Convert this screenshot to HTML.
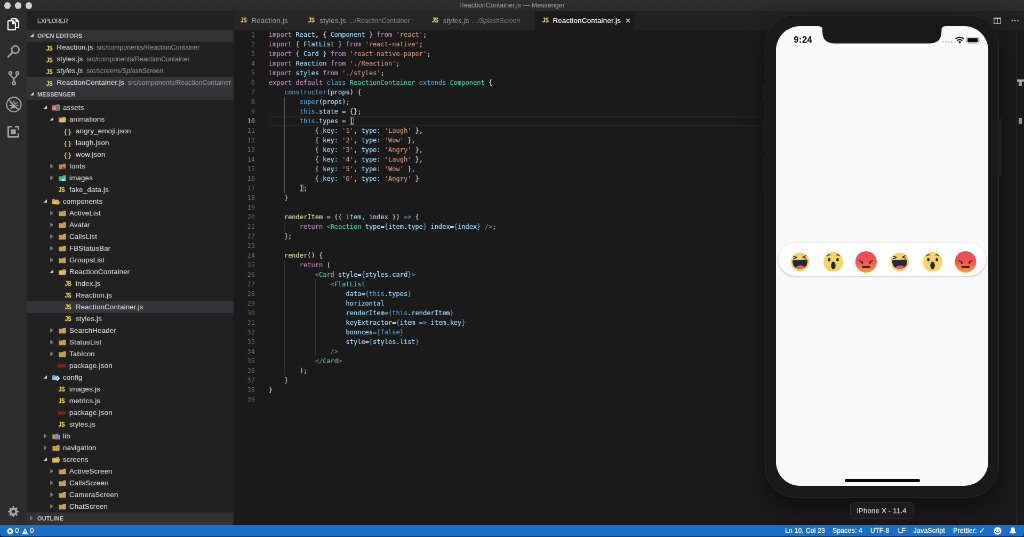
<!DOCTYPE html><html lang="en"><head><meta charset="utf-8"><title>ReactionContainer.js — Messenger</title><style>
*{box-sizing:border-box;margin:0;padding:0}
html,body{width:1024px;height:537px;overflow:hidden;background:#1a1a1a}
body{font-family:"Liberation Sans",sans-serif}
#root{will-change:transform;position:absolute;left:0;top:0;width:1920px;height:1007px;transform:scale(0.533333);transform-origin:0 0;overflow:hidden;background:#1a1a1a;color:#ccc;font-size:13px}
.abs{position:absolute}
#title{left:0;top:0;width:1920px;height:20.5px;background:linear-gradient(#2f2f2f,#2a2a2a);color:#929292;font-size:12.6px;line-height:21px;text-align:center;-webkit-text-stroke:0.2px #929292}
.tl{position:absolute;top:4px;width:12.5px;height:12.5px;border-radius:50%;background:#d2d2d2}
#act{left:0;top:20.5px;width:50px;height:964px;background:#2d2d2d}
#side{left:50px;top:20.5px;width:388.4px;height:964px;background:#212121}
#tabs{left:438px;top:20.5px;width:1482px;height:35px;background:#212121}
#editor{left:438px;top:55.5px;width:1482px;height:930px;background:#1a1a1a}
#status{left:0;top:984px;width:1920px;height:23px;background:#1a6fcb;color:#fff;font-size:12px;line-height:22px}

.cl{position:absolute;left:66px;height:18px;line-height:18px;-webkit-text-stroke:0.22px;font-family:"DejaVu Sans Mono","Liberation Mono",monospace;font-size:12px;white-space:pre;color:#d4d4d4}
.ln{position:absolute;left:0;width:40px;height:18px;line-height:18px;text-align:right;font-family:"DejaVu Sans Mono","Liberation Mono",monospace;font-size:12px;color:#6e6e6e}
.ln.cur{color:#c6c6c6}
.ig{position:absolute;width:1px;height:18px;background:#333}.ig.a{background:#5a5a5a}
.k{color:#c586c0}.b{color:#569cd6}.t{color:#4ec9b0}.v{color:#9cdcfe}.s{color:#ce9178}.f{color:#dcdcaa}.g{color:#808080}
.m{outline:1px solid #777;outline-offset:-1px}
.js{position:absolute;font-family:"Liberation Sans",sans-serif;font-weight:bold;font-size:12.5px;letter-spacing:-0.5px;color:#e8d44a;line-height:12px;transform:scaleX(0.8);transform-origin:0 50%;-webkit-text-stroke:0.3px #e8d44a}
.tab{position:absolute;top:0;height:35px;background:#262626;border-right:1.5px solid #1d1d1d}
.tab .lb{position:absolute;top:0;line-height:36px;font-size:13.2px;white-space:nowrap;color:#999;letter-spacing:0.3px;-webkit-text-stroke:0.15px #999}
.tab .ds{position:absolute;top:0;line-height:37px;font-size:12.1px;white-space:nowrap;color:#7d7d7d;-webkit-text-stroke:0.15px #7d7d7d}
.tab.act{background:#1a1a1a}
.tab.act .lb{color:#fff;-webkit-text-stroke:0.2px #fff}
.st{position:absolute;top:0;white-space:nowrap;line-height:22px;font-size:12.3px;color:#fff;letter-spacing:0.15px;-webkit-text-stroke:0.3px #fff}

.hd{left:0;width:388px;height:22px;background:#323232;font-size:11px;font-weight:bold;color:#c8c8c8;line-height:22px;letter-spacing:0.1px}
.row{left:0;width:388px;height:22px}
.row.sel{background:#35363c}
.nm{top:0;line-height:22px;font-size:13.2px;color:#d4d4d4;white-space:nowrap;letter-spacing:0.25px;-webkit-text-stroke:0.2px #d4d4d4}
.dsc{font-size:12.4px;color:#8e8e8e;margin-left:6.5px;letter-spacing:0;-webkit-text-stroke:0.15px #8e8e8e}
</style></head><body><div id="root">
<div id="title" class="abs"><span class="tl" style="left:7.5px"></span><span class="tl" style="left:27.5px"></span><span class="tl" style="left:47.5px"></span><span style="position:relative;left:0px">ReactionContainer.js — Messenger</span></div>
<div id="act" class="abs"><svg class="abs" style="left:13.2px;top:12.2px" width="24" height="24.5" preserveAspectRatio="none" viewBox="0 0 24 24" fill="none" stroke="#fff" stroke-width="2.2" stroke-linejoin="round">
<path d="M8.5 5V3.2Q8.5 2 9.7 2H17L22 7V17.3Q22 18.5 20.8 18.5H16.5"/>
<path d="M3.2 6H11.5L16 10.5V21.3Q16 22.5 14.8 22.5H3.2Q2 22.5 2 21.3V7.2Q2 6 3.2 6Z"/>
<path d="M10.5 6.5V11.5H15.5Z" fill="#fff" stroke-width="1"/>
<path d="M16.5 2.5V7.5H21.5Z" fill="#fff" stroke-width="1"/>
</svg><svg class="abs" style="left:13px;top:63.5px" width="25" height="25" viewBox="0 0 25 25" fill="none" stroke="#a3a3a3" stroke-width="2.7" stroke-linecap="round">
<circle cx="15.8" cy="9" r="6.9"/><path d="M10.4 14.4L2.2 22.8" stroke-width="3.2"/></svg><svg class="abs" style="left:14.5px;top:112px" width="22" height="27" viewBox="0 0 22 27" fill="none" stroke="#a3a3a3" stroke-width="2.4">
<circle cx="4.5" cy="4" r="2.7"/><circle cx="17.5" cy="4" r="2.7"/><circle cx="11" cy="23" r="2.7"/>
<path d="M4.5 6.7C4.5 11 11 12 11 16V20.3M17.5 6.7C17.5 11 11 12 11 16"/></svg><svg class="abs" style="left:10.5px;top:160.5px" width="30" height="30" viewBox="0 0 30 30" fill="none" stroke="#a3a3a3" stroke-width="2.3">
<circle cx="15" cy="15" r="13.5"/><path d="M5.5 5.5L24.5 24.5"/>
<ellipse cx="15" cy="16.5" rx="4.8" ry="6" fill="#a3a3a3" stroke="none"/>
<path d="M15 11V7.5M11 13L7.5 10.5M19 13L22.5 10.5M10.8 17H6.5M19.2 17H23.5M11.5 20.5L8.5 23.5M18.5 20.5L21.5 23.5" stroke-width="1.9"/>
<path d="M8 6L24 22" stroke="#2d2d2d" stroke-width="1.6"/>
</svg><svg class="abs" style="left:14px;top:215px" width="22" height="22" viewBox="0 0 22 22" fill="none" stroke="#a3a3a3" stroke-width="3">
<path d="M8 1.5H1.5V8M14 1.5H20.5V8M8 20.5H1.5V14M14 20.5H20.5V14"/>
<rect x="6.5" y="6.5" width="9" height="9" fill="#a3a3a3" stroke="none"/>
<path d="M1.5 8V14M8 20.5H14" stroke-width="3"/>
</svg><svg class="abs" style="left:0;top:0" width="50" height="964" viewBox="0 0 50 964"><path d="M32.39 937.01L35.22 937.01L35.22 939.59L32.39 939.59L31.14 942.61L33.14 944.61L31.31 946.44L29.31 944.44L26.29 945.69L26.29 948.52L23.71 948.52L23.71 945.69L20.69 944.44L18.69 946.44L16.86 944.61L18.86 942.61L17.61 939.59L14.78 939.59L14.78 937.01L17.61 937.01L18.86 933.99L16.86 931.99L18.69 930.16L20.69 932.16L23.71 930.91L23.71 928.08L26.29 928.08L26.29 930.91L29.31 932.16L31.31 930.16L33.14 931.99L31.14 933.99Z" fill="#a3a3a3"/><circle cx="25" cy="938.3" r="7.7" fill="#a3a3a3"/><circle cx="25" cy="938.3" r="3.3" fill="#2d2d2d"/></svg></div>
<div id="side" class="abs"><div class="abs" style="left:20px;top:1.5px;line-height:35px;font-size:11px;color:#c4c4c4;letter-spacing:-0.35px;-webkit-text-stroke:0.25px #c4c4c4">EXPLORER</div><div class="abs hd" style="top:35px"><svg class="abs" style="left:5.5px;top:6.5px" width="8" height="8" viewBox="0 0 8 8"><path d="M7 0.5V7H0.5Z" fill="#d0d0d0"/></svg><span class="abs" style="left:20px">OPEN EDITORS</span></div><div class="abs row" style="top:57px"><span class="abs" style="left:35.5px;top:5px"><span class="js" style="position:static;display:inline-block;width:16px;text-align:left;padding-left:1px">JS</span></span><span class="abs nm" style="left:56.5px;">Reaction.js<span class="dsc">src/components/ReactionContainer</span></span></div><div class="abs row" style="top:79px"><span class="abs" style="left:35.5px;top:5px"><span class="js" style="position:static;display:inline-block;width:16px;text-align:left;padding-left:1px">JS</span></span><span class="abs nm" style="left:56.5px;">styles.js<span class="dsc">src/components/ReactionContainer</span></span></div><div class="abs row" style="top:101px"><span class="abs" style="left:35.5px;top:5px"><span class="js" style="position:static;display:inline-block;width:16px;text-align:left;padding-left:1px">JS</span></span><span class="abs nm" style="left:56.5px;font-style:italic">styles.js<span class="dsc">src/screens/SplashScreen</span></span></div><div class="abs row sel" style="top:123px"><span class="abs" style="left:35.5px;top:5px"><span class="js" style="position:static;display:inline-block;width:16px;text-align:left;padding-left:1px">JS</span></span><span class="abs nm" style="left:56.5px;">ReactionContainer.js<span class="dsc">src/components/ReactionContainer</span></span></div><div class="abs hd" style="top:145px"><svg class="abs" style="left:5.5px;top:6.5px" width="8" height="8" viewBox="0 0 8 8"><path d="M7 0.5V7H0.5Z" fill="#d0d0d0"/></svg><span class="abs" style="left:20px">MESSENGER</span></div><div class="abs row" style="top:170px"><svg class="abs" style="left:31px;top:6px" width="8" height="8" viewBox="0 0 8 8"><path d="M7 0.5V7H0.5Z" fill="#d0d0d0"/></svg><span class="abs" style="left:47.2px;top:3px"><svg width="16" height="16" viewBox="0 0 16 16"><path d="M0.8 13V4.4L2 3.2H5.2L6.4 4.6H9V13Z" fill="#e06e6e"/><path d="M0.8 13L2.6 7H9V13Z" fill="#ea8080"/><rect x="6.6" y="2.6" width="8.6" height="11" fill="#8f9696"/><rect x="7.8" y="4" width="2.6" height="2.4" fill="#5f6666"/><rect x="11.4" y="4" width="2.6" height="2.4" fill="#5f6666"/><rect x="7.8" y="7.4" width="2.6" height="2.4" fill="#5f6666"/><rect x="11.4" y="7.4" width="2.6" height="2.4" fill="#5f6666"/><rect x="7.8" y="10.8" width="2.6" height="1.8" fill="#5f6666"/><rect x="11.4" y="10.8" width="2.6" height="1.8" fill="#5f6666"/><rect x="9.4" y="1.6" width="4" height="1.4" fill="#e06e6e"/></svg></span><span class="abs nm" style="left:68px">assets</span></div><div class="abs row" style="top:192px"><svg class="abs" style="left:43px;top:6px" width="8" height="8" viewBox="0 0 8 8"><path d="M7 0.5V7H0.5Z" fill="#d0d0d0"/></svg><span class="abs" style="left:59.2px;top:3px"><svg width="16" height="16" viewBox="0 0 16 16"><path d="M1 13.2V4.6H7.6L8.9 3.1H14.2V13.2Z" fill="#c8a052"/><path d="M3.2 6.6H15.4L13.6 13.3H1.2Z" fill="#e2ba6a"/></svg></span><span class="abs nm" style="left:80px">animations</span></div><div class="abs row" style="top:214px"><span class="abs" style="left:71.2px;top:4.5px"><span style="display:inline-block;width:16px;text-align:center;font-family:'Liberation Sans',sans-serif;font-size:12.5px;font-weight:bold;color:#d9c840;letter-spacing:3px;line-height:12px;margin-left:-1px">{}</span></span><span class="abs nm" style="left:92px">angry_emoji.json</span></div><div class="abs row" style="top:236px"><span class="abs" style="left:71.2px;top:4.5px"><span style="display:inline-block;width:16px;text-align:center;font-family:'Liberation Sans',sans-serif;font-size:12.5px;font-weight:bold;color:#d9c840;letter-spacing:3px;line-height:12px;margin-left:-1px">{}</span></span><span class="abs nm" style="left:92px">laugh.json</span></div><div class="abs row" style="top:258px"><span class="abs" style="left:71.2px;top:4.5px"><span style="display:inline-block;width:16px;text-align:center;font-family:'Liberation Sans',sans-serif;font-size:12.5px;font-weight:bold;color:#d9c840;letter-spacing:3px;line-height:12px;margin-left:-1px">{}</span></span><span class="abs nm" style="left:92px">wow.json</span></div><div class="abs row" style="top:280px"><svg class="abs" style="left:43.5px;top:6px" width="6.5" height="9" viewBox="0 0 8 10" preserveAspectRatio="none"><path d="M1 0.8L6.6 5L1 9.2Z" fill="#6f6f6f" stroke="#a0a0a0" stroke-width="0.9"/></svg><span class="abs" style="left:59.2px;top:3px"><svg width="16" height="16" viewBox="0 0 16 16"><path d="M1.4 13.3V4.4H8.4L9.7 2.9H14.6V13.3Z" fill="#c8824c"/><rect x="9.7" y="2.9" width="4.9" height="1.2" fill="#dc9a62"/><path d="M6.4 13.3L8.4 8.2H9.6L11.6 13.3H10.5L10.1 12.2H7.9L7.5 13.3Z" fill="#6e3418"/><path d="M11.8 10.2H14.2V13.3H11.8Z" fill="#6e3418"/></svg></span><span class="abs nm" style="left:80px">fonts</span></div><div class="abs row" style="top:302px"><svg class="abs" style="left:43.5px;top:6px" width="6.5" height="9" viewBox="0 0 8 10" preserveAspectRatio="none"><path d="M1 0.8L6.6 5L1 9.2Z" fill="#6f6f6f" stroke="#a0a0a0" stroke-width="0.9"/></svg><span class="abs" style="left:59.2px;top:3px"><svg width="16" height="16" viewBox="0 0 16 16"><path d="M1.4 13.3V4.4H8.4L9.7 2.9H14.6V13.3Z" fill="#3cb88c"/><rect x="9.7" y="2.9" width="4.9" height="1.2" fill="#6ad4ae"/><path d="M6.6 12.6L9.2 9L10.8 11L12 9.8L14 12.6Z" fill="#eafff6"/><circle cx="12.6" cy="7.4" r="0.9" fill="#eafff6"/></svg></span><span class="abs nm" style="left:80px">images</span></div><div class="abs row" style="top:324px"><span class="abs" style="left:58.8px;top:3.4px"><span class="js" style="position:static;display:inline-block;width:16px;text-align:left;padding-left:1px">JS</span></span><span class="abs nm" style="left:80px">fake_data.js</span></div><div class="abs row" style="top:346px"><svg class="abs" style="left:31px;top:6px" width="8" height="8" viewBox="0 0 8 8"><path d="M7 0.5V7H0.5Z" fill="#d0d0d0"/></svg><span class="abs" style="left:47.2px;top:3px"><svg width="16" height="16" viewBox="0 0 16 16"><path d="M0.8 13V4.2L2 3H5.4L6.6 4.4H12.4V13Z" fill="#c9a558"/><path d="M0.8 13L2.8 6.8H13.6L12.4 13Z" fill="#e0bf74"/><path d="M7 6.6H9.6A1.6 1.6 0 1 1 12.4 6.6H14.2V8.4A1.7 1.7 0 1 1 14.2 11.4V13.4H7V11.4A1.6 1.6 0 1 0 7 8.4Z" fill="#f7a325"/></svg></span><span class="abs nm" style="left:68px">components</span></div><div class="abs row" style="top:368px"><svg class="abs" style="left:43.5px;top:6px" width="6.5" height="9" viewBox="0 0 8 10" preserveAspectRatio="none"><path d="M1 0.8L6.6 5L1 9.2Z" fill="#6f6f6f" stroke="#a0a0a0" stroke-width="0.9"/></svg><span class="abs" style="left:59.2px;top:3px"><svg width="16" height="16" viewBox="0 0 16 16"><path d="M1.4 13.3V4.4H8.4L9.7 2.9H14.6V13.3Z" fill="#c99f4f"/><rect x="9.9" y="2.9" width="4.7" height="1.1" fill="#dcb364"/></svg></span><span class="abs nm" style="left:80px">ActiveList</span></div><div class="abs row" style="top:390px"><svg class="abs" style="left:43.5px;top:6px" width="6.5" height="9" viewBox="0 0 8 10" preserveAspectRatio="none"><path d="M1 0.8L6.6 5L1 9.2Z" fill="#6f6f6f" stroke="#a0a0a0" stroke-width="0.9"/></svg><span class="abs" style="left:59.2px;top:3px"><svg width="16" height="16" viewBox="0 0 16 16"><path d="M1.4 13.3V4.4H8.4L9.7 2.9H14.6V13.3Z" fill="#c99f4f"/><rect x="9.9" y="2.9" width="4.7" height="1.1" fill="#dcb364"/></svg></span><span class="abs nm" style="left:80px">Avatar</span></div><div class="abs row" style="top:412px"><svg class="abs" style="left:43.5px;top:6px" width="6.5" height="9" viewBox="0 0 8 10" preserveAspectRatio="none"><path d="M1 0.8L6.6 5L1 9.2Z" fill="#6f6f6f" stroke="#a0a0a0" stroke-width="0.9"/></svg><span class="abs" style="left:59.2px;top:3px"><svg width="16" height="16" viewBox="0 0 16 16"><path d="M1.4 13.3V4.4H8.4L9.7 2.9H14.6V13.3Z" fill="#c99f4f"/><rect x="9.9" y="2.9" width="4.7" height="1.1" fill="#dcb364"/></svg></span><span class="abs nm" style="left:80px">CallsList</span></div><div class="abs row" style="top:434px"><svg class="abs" style="left:43.5px;top:6px" width="6.5" height="9" viewBox="0 0 8 10" preserveAspectRatio="none"><path d="M1 0.8L6.6 5L1 9.2Z" fill="#6f6f6f" stroke="#a0a0a0" stroke-width="0.9"/></svg><span class="abs" style="left:59.2px;top:3px"><svg width="16" height="16" viewBox="0 0 16 16"><path d="M1.4 13.3V4.4H8.4L9.7 2.9H14.6V13.3Z" fill="#c99f4f"/><rect x="9.9" y="2.9" width="4.7" height="1.1" fill="#dcb364"/></svg></span><span class="abs nm" style="left:80px">FBStatusBar</span></div><div class="abs row" style="top:456px"><svg class="abs" style="left:43.5px;top:6px" width="6.5" height="9" viewBox="0 0 8 10" preserveAspectRatio="none"><path d="M1 0.8L6.6 5L1 9.2Z" fill="#6f6f6f" stroke="#a0a0a0" stroke-width="0.9"/></svg><span class="abs" style="left:59.2px;top:3px"><svg width="16" height="16" viewBox="0 0 16 16"><path d="M1.4 13.3V4.4H8.4L9.7 2.9H14.6V13.3Z" fill="#c99f4f"/><rect x="9.9" y="2.9" width="4.7" height="1.1" fill="#dcb364"/></svg></span><span class="abs nm" style="left:80px">GroupsList</span></div><div class="abs row" style="top:478px"><svg class="abs" style="left:43px;top:6px" width="8" height="8" viewBox="0 0 8 8"><path d="M7 0.5V7H0.5Z" fill="#d0d0d0"/></svg><span class="abs" style="left:59.2px;top:3px"><svg width="16" height="16" viewBox="0 0 16 16"><path d="M1 13.2V4.6H7.6L8.9 3.1H14.2V13.2Z" fill="#c8a052"/><path d="M3.2 6.6H15.4L13.6 13.3H1.2Z" fill="#e2ba6a"/></svg></span><span class="abs nm" style="left:80px">ReactionContainer</span></div><div class="abs row" style="top:500px"><span class="abs" style="left:70.8px;top:3.4px"><span class="js" style="position:static;display:inline-block;width:16px;text-align:left;padding-left:1px">JS</span></span><span class="abs nm" style="left:92px">index.js</span></div><div class="abs row" style="top:522px"><span class="abs" style="left:70.8px;top:3.4px"><span class="js" style="position:static;display:inline-block;width:16px;text-align:left;padding-left:1px">JS</span></span><span class="abs nm" style="left:92px">Reaction.js</span></div><div class="abs row sel" style="top:544px"><span class="abs" style="left:70.8px;top:3.4px"><span class="js" style="position:static;display:inline-block;width:16px;text-align:left;padding-left:1px">JS</span></span><span class="abs nm" style="left:92px">ReactionContainer.js</span></div><div class="abs row" style="top:566px"><span class="abs" style="left:70.8px;top:3.4px"><span class="js" style="position:static;display:inline-block;width:16px;text-align:left;padding-left:1px">JS</span></span><span class="abs nm" style="left:92px">styles.js</span></div><div class="abs row" style="top:588px"><svg class="abs" style="left:43.5px;top:6px" width="6.5" height="9" viewBox="0 0 8 10" preserveAspectRatio="none"><path d="M1 0.8L6.6 5L1 9.2Z" fill="#6f6f6f" stroke="#a0a0a0" stroke-width="0.9"/></svg><span class="abs" style="left:59.2px;top:3px"><svg width="16" height="16" viewBox="0 0 16 16"><path d="M1.4 13.3V4.4H8.4L9.7 2.9H14.6V13.3Z" fill="#c99f4f"/><rect x="9.9" y="2.9" width="4.7" height="1.1" fill="#dcb364"/></svg></span><span class="abs nm" style="left:80px">SearchHeader</span></div><div class="abs row" style="top:610px"><svg class="abs" style="left:43.5px;top:6px" width="6.5" height="9" viewBox="0 0 8 10" preserveAspectRatio="none"><path d="M1 0.8L6.6 5L1 9.2Z" fill="#6f6f6f" stroke="#a0a0a0" stroke-width="0.9"/></svg><span class="abs" style="left:59.2px;top:3px"><svg width="16" height="16" viewBox="0 0 16 16"><path d="M1.4 13.3V4.4H8.4L9.7 2.9H14.6V13.3Z" fill="#c99f4f"/><rect x="9.9" y="2.9" width="4.7" height="1.1" fill="#dcb364"/></svg></span><span class="abs nm" style="left:80px">StatusList</span></div><div class="abs row" style="top:632px"><svg class="abs" style="left:43.5px;top:6px" width="6.5" height="9" viewBox="0 0 8 10" preserveAspectRatio="none"><path d="M1 0.8L6.6 5L1 9.2Z" fill="#6f6f6f" stroke="#a0a0a0" stroke-width="0.9"/></svg><span class="abs" style="left:59.2px;top:3px"><svg width="16" height="16" viewBox="0 0 16 16"><path d="M1.4 13.3V4.4H8.4L9.7 2.9H14.6V13.3Z" fill="#c99f4f"/><rect x="9.9" y="2.9" width="4.7" height="1.1" fill="#dcb364"/></svg></span><span class="abs nm" style="left:80px">TabIcon</span></div><div class="abs row" style="top:654px"><span class="abs" style="left:58px;top:3px"><svg width="16" height="16" viewBox="0 0 16 16"><rect x="0.5" y="5.5" width="15" height="5.2" fill="#a32a28"/><path d="M2 9.4V6.8H5.2V9.4H4.2V7.8H3.4V9.4ZM6 6.8H9.2V9.4H7.6V10.2H6ZM7.4 7.8V8.6H8V7.8ZM10 9.4V6.8H14.6V9.4H13.8V7.8H13.2V9.4H12.4V7.8H11.6V9.4Z" fill="#2a1010" opacity="0.55"/></svg></span><span class="abs nm" style="left:80px">package.json</span></div><div class="abs row" style="top:676px"><svg class="abs" style="left:31px;top:6px" width="8" height="8" viewBox="0 0 8 8"><path d="M7 0.5V7H0.5Z" fill="#d0d0d0"/></svg><span class="abs" style="left:47.2px;top:3px"><svg width="16" height="16" viewBox="0 0 16 16"><path d="M0.8 13V4.2L2 3H5.4L6.6 4.4H12.4V13Z" fill="#5fa8e0"/><path d="M0.8 13L2.8 6.8H13.6L12.4 13Z" fill="#86c3f2"/><circle cx="10.8" cy="9.6" r="3.6" fill="#b5dcf8"/><circle cx="10.8" cy="9.6" r="1.4" fill="#4f9bd6"/><rect x="10" y="5" width="1.6" height="1.6" fill="#b5dcf8"/><rect x="10" y="12.6" width="1.6" height="1.6" fill="#b5dcf8"/><rect x="6.2" y="8.8" width="1.6" height="1.6" fill="#b5dcf8"/><rect x="13.8" y="8.8" width="1.6" height="1.6" fill="#b5dcf8"/></svg></span><span class="abs nm" style="left:68px">config</span></div><div class="abs row" style="top:698px"><span class="abs" style="left:58.8px;top:3.4px"><span class="js" style="position:static;display:inline-block;width:16px;text-align:left;padding-left:1px">JS</span></span><span class="abs nm" style="left:80px">images.js</span></div><div class="abs row" style="top:720px"><span class="abs" style="left:58.8px;top:3.4px"><span class="js" style="position:static;display:inline-block;width:16px;text-align:left;padding-left:1px">JS</span></span><span class="abs nm" style="left:80px">metrics.js</span></div><div class="abs row" style="top:742px"><span class="abs" style="left:58px;top:3px"><svg width="16" height="16" viewBox="0 0 16 16"><rect x="0.5" y="5.5" width="15" height="5.2" fill="#a32a28"/><path d="M2 9.4V6.8H5.2V9.4H4.2V7.8H3.4V9.4ZM6 6.8H9.2V9.4H7.6V10.2H6ZM7.4 7.8V8.6H8V7.8ZM10 9.4V6.8H14.6V9.4H13.8V7.8H13.2V9.4H12.4V7.8H11.6V9.4Z" fill="#2a1010" opacity="0.55"/></svg></span><span class="abs nm" style="left:80px">package.json</span></div><div class="abs row" style="top:764px"><span class="abs" style="left:58.8px;top:3.4px"><span class="js" style="position:static;display:inline-block;width:16px;text-align:left;padding-left:1px">JS</span></span><span class="abs nm" style="left:80px">styles.js</span></div><div class="abs row" style="top:786px"><svg class="abs" style="left:31.5px;top:6px" width="6.5" height="9" viewBox="0 0 8 10" preserveAspectRatio="none"><path d="M1 0.8L6.6 5L1 9.2Z" fill="#6f6f6f" stroke="#a0a0a0" stroke-width="0.9"/></svg><span class="abs" style="left:47.2px;top:3px"><svg width="16" height="16" viewBox="0 0 16 16"><path d="M1.4 13.3V4.4H8.4L9.7 2.9H12V13.3Z" fill="#c99f4f"/><rect x="5.6" y="5.2" width="2.3" height="8.8" fill="#e05a4a"/><rect x="8.2" y="4.4" width="2.3" height="9.6" fill="#4aa0e0"/><rect x="10.8" y="5.2" width="2.3" height="8.8" fill="#9460d4"/><rect x="13.4" y="5.8" width="1.8" height="8.2" fill="#e8b03a"/></svg></span><span class="abs nm" style="left:68px">lib</span></div><div class="abs row" style="top:808px"><svg class="abs" style="left:31.5px;top:6px" width="6.5" height="9" viewBox="0 0 8 10" preserveAspectRatio="none"><path d="M1 0.8L6.6 5L1 9.2Z" fill="#6f6f6f" stroke="#a0a0a0" stroke-width="0.9"/></svg><span class="abs" style="left:47.2px;top:3px"><svg width="16" height="16" viewBox="0 0 16 16"><path d="M1.4 13.3V4.4H8.4L9.7 2.9H14.6V13.3Z" fill="#c99f4f"/><rect x="9.9" y="2.9" width="4.7" height="1.1" fill="#dcb364"/></svg></span><span class="abs nm" style="left:68px">navigation</span></div><div class="abs row" style="top:830px"><svg class="abs" style="left:31px;top:6px" width="8" height="8" viewBox="0 0 8 8"><path d="M7 0.5V7H0.5Z" fill="#d0d0d0"/></svg><span class="abs" style="left:47.2px;top:3px"><svg width="16" height="16" viewBox="0 0 16 16"><path d="M1 13.2V4.6H7.6L8.9 3.1H14.2V13.2Z" fill="#c8a052"/><path d="M3.2 6.6H15.4L13.6 13.3H1.2Z" fill="#e2ba6a"/></svg></span><span class="abs nm" style="left:68px">screens</span></div><div class="abs row" style="top:852px"><svg class="abs" style="left:43.5px;top:6px" width="6.5" height="9" viewBox="0 0 8 10" preserveAspectRatio="none"><path d="M1 0.8L6.6 5L1 9.2Z" fill="#6f6f6f" stroke="#a0a0a0" stroke-width="0.9"/></svg><span class="abs" style="left:59.2px;top:3px"><svg width="16" height="16" viewBox="0 0 16 16"><path d="M1.4 13.3V4.4H8.4L9.7 2.9H14.6V13.3Z" fill="#c99f4f"/><rect x="9.9" y="2.9" width="4.7" height="1.1" fill="#dcb364"/></svg></span><span class="abs nm" style="left:80px">ActiveScreen</span></div><div class="abs row" style="top:874px"><svg class="abs" style="left:43.5px;top:6px" width="6.5" height="9" viewBox="0 0 8 10" preserveAspectRatio="none"><path d="M1 0.8L6.6 5L1 9.2Z" fill="#6f6f6f" stroke="#a0a0a0" stroke-width="0.9"/></svg><span class="abs" style="left:59.2px;top:3px"><svg width="16" height="16" viewBox="0 0 16 16"><path d="M1.4 13.3V4.4H8.4L9.7 2.9H14.6V13.3Z" fill="#c99f4f"/><rect x="9.9" y="2.9" width="4.7" height="1.1" fill="#dcb364"/></svg></span><span class="abs nm" style="left:80px">CallsScreen</span></div><div class="abs row" style="top:896px"><svg class="abs" style="left:43.5px;top:6px" width="6.5" height="9" viewBox="0 0 8 10" preserveAspectRatio="none"><path d="M1 0.8L6.6 5L1 9.2Z" fill="#6f6f6f" stroke="#a0a0a0" stroke-width="0.9"/></svg><span class="abs" style="left:59.2px;top:3px"><svg width="16" height="16" viewBox="0 0 16 16"><path d="M1.4 13.3V4.4H8.4L9.7 2.9H14.6V13.3Z" fill="#c99f4f"/><rect x="9.9" y="2.9" width="4.7" height="1.1" fill="#dcb364"/></svg></span><span class="abs nm" style="left:80px">CameraScreen</span></div><div class="abs row" style="top:918px"><svg class="abs" style="left:43.5px;top:6px" width="6.5" height="9" viewBox="0 0 8 10" preserveAspectRatio="none"><path d="M1 0.8L6.6 5L1 9.2Z" fill="#6f6f6f" stroke="#a0a0a0" stroke-width="0.9"/></svg><span class="abs" style="left:59.2px;top:3px"><svg width="16" height="16" viewBox="0 0 16 16"><path d="M1.4 13.3V4.4H8.4L9.7 2.9H14.6V13.3Z" fill="#c99f4f"/><rect x="9.9" y="2.9" width="4.7" height="1.1" fill="#dcb364"/></svg></span><span class="abs nm" style="left:80px">ChatScreen</span></div><div class="abs hd" style="top:940.8px;height:23px"><svg class="abs" style="left:6.0px;top:6px" width="6.5" height="9" viewBox="0 0 8 10" preserveAspectRatio="none"><path d="M1 0.8L6.6 5L1 9.2Z" fill="#6f6f6f" stroke="#a0a0a0" stroke-width="0.9"/></svg><span class="abs" style="left:20px">OUTLINE</span></div></div>
<div id="tabs" class="abs"><div class="tab" style="left:0.4px;width:126.9px"><span class="js" style="left:12.8px;top:11.5px">JS</span><span class="lb" style="left:33px;">Reaction.js</span></div><div class="tab" style="left:127.3px;width:235.5px"><span class="js" style="left:13.200000000000001px;top:11.5px">JS</span><span class="lb" style="left:34.0px;">styles.js</span><span class="ds" style="left:87.4px;">…/ReactionContainer</span></div><div class="tab" style="left:362.8px;width:203.4px"><span class="js" style="left:9.4px;top:11.5px">JS</span><span class="lb" style="left:29.6px;font-style:italic;">styles.js</span><span class="ds" style="left:83.6px;font-style:italic;">…/SplashScreen</span></div><div class="tab act" style="left:566.2px;width:186.2px"><span class="js" style="left:12.8px;top:11.5px">JS</span><span class="lb" style="left:32.2px;">ReactionContainer.js</span><svg class="abs" style="left:169px;top:13.5px" width="9" height="9" viewBox="0 0 9 9"><path d="M1 1L8 8M8 1L1 8" stroke="#e0e0e0" stroke-width="1.6" fill="none"/></svg></div><svg class="abs" style="left:1424.5px;top:12px" width="14" height="12" viewBox="0 0 16 14"><rect x="0.8" y="0.8" width="14.4" height="12.4" fill="none" stroke="#c5c5c5" stroke-width="1.6"/><rect x="0.8" y="0.8" width="14.4" height="2.4" fill="#c5c5c5"/><rect x="7.2" y="1" width="1.6" height="12" fill="#c5c5c5"/></svg><svg class="abs" style="left:1458px;top:16.5px" width="14.5" height="3.6" viewBox="0 0 16 4"><circle cx="2" cy="2" r="1.5" fill="#c5c5c5"/><circle cx="8" cy="2" r="1.5" fill="#c5c5c5"/><circle cx="14" cy="2" r="1.5" fill="#c5c5c5"/></svg></div>
<div id="editor" class="abs"><div class="abs" style="left:66px;top:162px;width:1282px;height:18px;border-top:2px solid #252525;border-bottom:2px solid #252525"></div>
<div class="ln" style="top:0px">1</div>
<div class="cl" style="top:0px"><span class="k">import</span> <span class="v">React</span>, { <span class="v">Component</span> } <span class="k">from</span> <span class="s">'react'</span>;</div>
<div class="ln" style="top:18px">2</div>
<div class="cl" style="top:18px"><span class="k">import</span> { <span class="v">FlatList</span> } <span class="k">from</span> <span class="s">'react-native'</span>;</div>
<div class="ln" style="top:36px">3</div>
<div class="cl" style="top:36px"><span class="k">import</span> { <span class="v">Card</span> } <span class="k">from</span> <span class="s">'react-native-paper'</span>;</div>
<div class="ln" style="top:54px">4</div>
<div class="cl" style="top:54px"><span class="k">import</span> <span class="v">Reaction</span> <span class="k">from</span> <span class="s">'./Reaction'</span>;</div>
<div class="ln" style="top:72px">5</div>
<div class="cl" style="top:72px"><span class="k">import</span> <span class="v">styles</span> <span class="k">from</span> <span class="s">'./styles'</span>;</div>
<div class="ln" style="top:90px">6</div>
<div class="cl" style="top:90px"><span class="k">export</span> <span class="k">default</span> <span class="b">class</span> <span class="t">ReactionContainer</span> <span class="b">extends</span> <span class="t">Component</span> {</div>
<div class="ln" style="top:108px">7</div>
<i class="ig" style="left:66.0px;top:108px"></i>
<div class="cl" style="top:108px">    <span class="b">constructor</span>(<span class="v">props</span>) {</div>
<div class="ln" style="top:126px">8</div>
<i class="ig" style="left:66.0px;top:126px"></i>
<i class="ig a" style="left:94.9px;top:126px"></i>
<div class="cl" style="top:126px">        <span class="b">super</span>(<span class="v">props</span>);</div>
<div class="ln" style="top:144px">9</div>
<i class="ig" style="left:66.0px;top:144px"></i>
<i class="ig a" style="left:94.9px;top:144px"></i>
<div class="cl" style="top:144px">        <span class="b">this</span>.<span class="v">state</span> = {};</div>
<div class="ln cur" style="top:162px">10</div>
<i class="ig" style="left:66.0px;top:162px"></i>
<i class="ig a" style="left:94.9px;top:162px"></i>
<div class="cl" style="top:162px">        <span class="b">this</span>.<span class="v">types</span> = <span class="m">[</span></div>
<div class="ln" style="top:180px">11</div>
<i class="ig" style="left:66.0px;top:180px"></i>
<i class="ig a" style="left:94.9px;top:180px"></i>
<i class="ig" style="left:123.8px;top:180px"></i>
<div class="cl" style="top:180px">            { <span class="v">key:</span> <span class="s">'1'</span>, <span class="v">type:</span> <span class="s">'Laugh'</span> },</div>
<div class="ln" style="top:198px">12</div>
<i class="ig" style="left:66.0px;top:198px"></i>
<i class="ig a" style="left:94.9px;top:198px"></i>
<i class="ig" style="left:123.8px;top:198px"></i>
<div class="cl" style="top:198px">            { <span class="v">key:</span> <span class="s">'2'</span>, <span class="v">type:</span> <span class="s">'Wow'</span> },</div>
<div class="ln" style="top:216px">13</div>
<i class="ig" style="left:66.0px;top:216px"></i>
<i class="ig a" style="left:94.9px;top:216px"></i>
<i class="ig" style="left:123.8px;top:216px"></i>
<div class="cl" style="top:216px">            { <span class="v">key:</span> <span class="s">'3'</span>, <span class="v">type:</span> <span class="s">'Angry'</span> },</div>
<div class="ln" style="top:234px">14</div>
<i class="ig" style="left:66.0px;top:234px"></i>
<i class="ig a" style="left:94.9px;top:234px"></i>
<i class="ig" style="left:123.8px;top:234px"></i>
<div class="cl" style="top:234px">            { <span class="v">key:</span> <span class="s">'4'</span>, <span class="v">type:</span> <span class="s">'Laugh'</span> },</div>
<div class="ln" style="top:252px">15</div>
<i class="ig" style="left:66.0px;top:252px"></i>
<i class="ig a" style="left:94.9px;top:252px"></i>
<i class="ig" style="left:123.8px;top:252px"></i>
<div class="cl" style="top:252px">            { <span class="v">key:</span> <span class="s">'5'</span>, <span class="v">type:</span> <span class="s">'Wow'</span> },</div>
<div class="ln" style="top:270px">16</div>
<i class="ig" style="left:66.0px;top:270px"></i>
<i class="ig a" style="left:94.9px;top:270px"></i>
<i class="ig" style="left:123.8px;top:270px"></i>
<div class="cl" style="top:270px">            { <span class="v">key:</span> <span class="s">'6'</span>, <span class="v">type:</span> <span class="s">'Angry'</span> }</div>
<div class="ln" style="top:288px">17</div>
<i class="ig" style="left:66.0px;top:288px"></i>
<i class="ig a" style="left:94.9px;top:288px"></i>
<div class="cl" style="top:288px">        <span class="m">]</span>;</div>
<div class="ln" style="top:306px">18</div>
<i class="ig" style="left:66.0px;top:306px"></i>
<div class="cl" style="top:306px">    }</div>
<div class="ln" style="top:324px">19</div>
<i class="ig" style="left:66.0px;top:324px"></i>
<div class="ln" style="top:342px">20</div>
<i class="ig" style="left:66.0px;top:342px"></i>
<div class="cl" style="top:342px">    <span class="f">renderItem</span> = ({ <span class="v">item</span>, <span class="v">index</span> }) <span class="b">=&gt;</span> {</div>
<div class="ln" style="top:360px">21</div>
<i class="ig" style="left:66.0px;top:360px"></i>
<i class="ig" style="left:94.9px;top:360px"></i>
<div class="cl" style="top:360px">        <span class="k">return</span> <span class="g">&lt;</span><span class="t">Reaction</span> <span class="v">type</span>=<span class="b">{</span><span class="v">item</span>.<span class="v">type</span><span class="b">}</span> <span class="v">index</span>=<span class="b">{</span><span class="v">index</span><span class="b">}</span> <span class="g">/&gt;</span>;</div>
<div class="ln" style="top:378px">22</div>
<i class="ig" style="left:66.0px;top:378px"></i>
<div class="cl" style="top:378px">    };</div>
<div class="ln" style="top:396px">23</div>
<i class="ig" style="left:66.0px;top:396px"></i>
<div class="ln" style="top:414px">24</div>
<i class="ig" style="left:66.0px;top:414px"></i>
<div class="cl" style="top:414px">    <span class="f">render</span>() {</div>
<div class="ln" style="top:432px">25</div>
<i class="ig" style="left:66.0px;top:432px"></i>
<i class="ig" style="left:94.9px;top:432px"></i>
<div class="cl" style="top:432px">        <span class="k">return</span> (</div>
<div class="ln" style="top:450px">26</div>
<i class="ig" style="left:66.0px;top:450px"></i>
<i class="ig" style="left:94.9px;top:450px"></i>
<i class="ig" style="left:123.8px;top:450px"></i>
<div class="cl" style="top:450px">            <span class="g">&lt;</span><span class="t">Card</span> <span class="v">style</span>=<span class="b">{</span><span class="v">styles</span>.<span class="v">card</span><span class="b">}</span><span class="g">&gt;</span></div>
<div class="ln" style="top:468px">27</div>
<i class="ig" style="left:66.0px;top:468px"></i>
<i class="ig" style="left:94.9px;top:468px"></i>
<i class="ig" style="left:123.8px;top:468px"></i>
<i class="ig" style="left:152.7px;top:468px"></i>
<div class="cl" style="top:468px">                <span class="g">&lt;</span><span class="t">FlatList</span></div>
<div class="ln" style="top:486px">28</div>
<i class="ig" style="left:66.0px;top:486px"></i>
<i class="ig" style="left:94.9px;top:486px"></i>
<i class="ig" style="left:123.8px;top:486px"></i>
<i class="ig" style="left:152.7px;top:486px"></i>
<i class="ig" style="left:181.6px;top:486px"></i>
<div class="cl" style="top:486px">                    <span class="v">data</span>=<span class="b">{this</span>.<span class="v">types</span><span class="b">}</span></div>
<div class="ln" style="top:504px">29</div>
<i class="ig" style="left:66.0px;top:504px"></i>
<i class="ig" style="left:94.9px;top:504px"></i>
<i class="ig" style="left:123.8px;top:504px"></i>
<i class="ig" style="left:152.7px;top:504px"></i>
<i class="ig" style="left:181.6px;top:504px"></i>
<div class="cl" style="top:504px">                    <span class="v">horizontal</span></div>
<div class="ln" style="top:522px">30</div>
<i class="ig" style="left:66.0px;top:522px"></i>
<i class="ig" style="left:94.9px;top:522px"></i>
<i class="ig" style="left:123.8px;top:522px"></i>
<i class="ig" style="left:152.7px;top:522px"></i>
<i class="ig" style="left:181.6px;top:522px"></i>
<div class="cl" style="top:522px">                    <span class="v">renderItem</span>=<span class="b">{this</span>.<span class="v">renderItem</span><span class="b">}</span></div>
<div class="ln" style="top:540px">31</div>
<i class="ig" style="left:66.0px;top:540px"></i>
<i class="ig" style="left:94.9px;top:540px"></i>
<i class="ig" style="left:123.8px;top:540px"></i>
<i class="ig" style="left:152.7px;top:540px"></i>
<i class="ig" style="left:181.6px;top:540px"></i>
<div class="cl" style="top:540px">                    <span class="v">keyExtractor</span>=<span class="b">{</span><span class="v">item</span> <span class="b">=&gt;</span> <span class="v">item</span>.<span class="v">key</span><span class="b">}</span></div>
<div class="ln" style="top:558px">32</div>
<i class="ig" style="left:66.0px;top:558px"></i>
<i class="ig" style="left:94.9px;top:558px"></i>
<i class="ig" style="left:123.8px;top:558px"></i>
<i class="ig" style="left:152.7px;top:558px"></i>
<i class="ig" style="left:181.6px;top:558px"></i>
<div class="cl" style="top:558px">                    <span class="v">bounces</span>=<span class="b">{false}</span></div>
<div class="ln" style="top:576px">33</div>
<i class="ig" style="left:66.0px;top:576px"></i>
<i class="ig" style="left:94.9px;top:576px"></i>
<i class="ig" style="left:123.8px;top:576px"></i>
<i class="ig" style="left:152.7px;top:576px"></i>
<i class="ig" style="left:181.6px;top:576px"></i>
<div class="cl" style="top:576px">                    <span class="v">style</span>=<span class="b">{</span><span class="v">styles</span>.<span class="v">list</span><span class="b">}</span></div>
<div class="ln" style="top:594px">34</div>
<i class="ig" style="left:66.0px;top:594px"></i>
<i class="ig" style="left:94.9px;top:594px"></i>
<i class="ig" style="left:123.8px;top:594px"></i>
<i class="ig" style="left:152.7px;top:594px"></i>
<div class="cl" style="top:594px">                <span class="g">/&gt;</span></div>
<div class="ln" style="top:612px">35</div>
<i class="ig" style="left:66.0px;top:612px"></i>
<i class="ig" style="left:94.9px;top:612px"></i>
<i class="ig" style="left:123.8px;top:612px"></i>
<div class="cl" style="top:612px">            <span class="g">&lt;/</span><span class="t">Card</span><span class="g">&gt;</span></div>
<div class="ln" style="top:630px">36</div>
<i class="ig" style="left:66.0px;top:630px"></i>
<i class="ig" style="left:94.9px;top:630px"></i>
<div class="cl" style="top:630px">        );</div>
<div class="ln" style="top:648px">37</div>
<i class="ig" style="left:66.0px;top:648px"></i>
<div class="cl" style="top:648px">    }</div>
<div class="ln" style="top:666px">38</div>
<div class="cl" style="top:666px">}</div>
<div class="ln" style="top:684px">39</div>
<div class="abs" style="left:1467.8px;top:0;width:1.3px;height:930px;background:#333"></div>
<div class="abs" style="left:1469px;top:93.5px;width:13px;height:3.6px;background:#b0b0b0"></div>
<div class="abs" style="left:1472px;top:97px;width:6px;height:8px;background:#a0a0a0"></div>
<div class="abs" style="left:1472px;top:165.5px;width:5.5px;height:11px;background:#9a9a9a"></div></div>
<div class="abs" style="left:1429.9px;top:155px;width:7px;height:36px;background:#232323;border-radius:2px;border-left:1px solid #303030"></div><div class="abs" style="left:1429.9px;top:222.5px;width:7px;height:63px;background:#232323;border-radius:2px;border-left:1px solid #303030"></div><div class="abs" style="left:1429.9px;top:294.8px;width:7px;height:64px;background:#232323;border-radius:2px;border-left:1px solid #303030"></div><div class="abs" style="left:1870.6000000000001px;top:220.7px;width:7px;height:109px;background:#262626;border-radius:2px;border-right:1px solid #2e2e2e"></div><div class="abs" style="left:1434.4px;top:27.6px;width:438.7px;height:905.0px;border-radius:57px;background:#191919;border:1.8px solid #2d2d2d;box-shadow:0 20px 46px 0 rgba(0,0,0,0.5)"></div><div class="abs" style="left:1455.4px;top:49.2px;width:397.6px;height:862.0px;border-radius:45px;background:#f9f9f9;overflow:hidden"><svg class="abs" style="left:78.89999999999986px;top:0" width="239.4" height="33.6" viewBox="0 0 239.4 33.6"><path d="M0 0H239.4Q231.4 0 231.4 7V9.600000000000001Q231.4 32.6 208.4 32.6H31Q8 32.6 8 9.600000000000001V7Q8 0 0 0Z" fill="#191919"/></svg><div class="abs" style="left:32.899999999999864px;top:16.099999999999994px;font-weight:bold;font-size:16.3px;line-height:19px;color:#1c1c1c;letter-spacing:0.6px;-webkit-text-stroke:0.3px #1c1c1c">9:24</div><div class="abs" style="left:311.4px;top:27.9px;width:3.2px;height:3.2px;border-radius:50%;background:#c4c4c4"></div><div class="abs" style="left:316.6px;top:27.9px;width:3.2px;height:3.2px;border-radius:50%;background:#c4c4c4"></div><div class="abs" style="left:321.8px;top:27.9px;width:3.2px;height:3.2px;border-radius:50%;background:#c4c4c4"></div><div class="abs" style="left:327.0px;top:27.9px;width:3.2px;height:3.2px;border-radius:50%;background:#c4c4c4"></div><svg class="abs" style="left:334.5px;top:18.7px" width="19" height="14.3" viewBox="0 0 16 12"><path d="M8 11.6L10.3 8.8A3.4 3.4 0 0 0 5.7 8.8Z" fill="#111"/><path d="M3.9 6.8A6 6 0 0 1 12.1 6.8M1.3 4.2A9.6 9.6 0 0 1 14.7 4.2" fill="none" stroke="#111" stroke-width="1.9"/></svg><svg class="abs" style="left:356.6px;top:20.0px" width="27" height="12.5" viewBox="0 0 27 11" preserveAspectRatio="none"><rect x="0.5" y="0.5" width="22.5" height="10" rx="2.8" fill="none" stroke="#9a9a9a" stroke-width="1"/><rect x="2" y="2" width="19.5" height="7" rx="1.6" fill="#0a0a0a"/><path d="M24.2 3.6Q25.8 4 25.8 5.5Q25.8 7 24.2 7.4Z" fill="#9a9a9a"/></svg><div class="abs" style="left:3.5px;top:405.7px;width:390.6px;height:62.6px;border-radius:31.3px;background:#fff;box-shadow:0 1.5px 3px rgba(0,0,0,0.22),0 0 1.5px rgba(0,0,0,0.18)"></div><svg class="abs" style="left:0;top:0" width="397.6" height="862.0" viewBox="0 0 397.6 862.0"><defs><linearGradient id="ang" x1="0" y1="0" x2="0" y2="1"><stop offset="0" stop-color="#ec4a58"/><stop offset="0.45" stop-color="#ee5350"/><stop offset="1" stop-color="#f6a03a"/></linearGradient></defs><g transform="translate(45.0 442.1) scale(1.75) rotate(-3)">
<circle r="10" fill="#f7d262"/>
<path d="M-6.6 -6.4L-3.2 -5L-6.6 -3.6M6.6 -6.4L3.2 -5L6.6 -3.6" fill="none" stroke="#2a2b3a" stroke-width="1" stroke-linecap="round" stroke-linejoin="round"/>
<path d="M-8 -2Q0 -2.8 8 -2Q8.4 7.2 0 7.4Q-8.4 7.2 -8 -2Z" fill="#26283a"/>
<path d="M-5 5.4Q0 2 5 5.4Q2.6 7.4 0 7.4Q-2.6 7.4 -5 5.4Z" fill="#f2566f"/>
</g><g transform="translate(107.5 442.1) scale(1.85)">
<circle r="10" fill="#f7d468"/>
<ellipse cx="0" cy="3.6" rx="2.3" ry="3.9" fill="#26283a"/>
<ellipse cx="-4.3" cy="-2.2" rx="1.25" ry="1.8" fill="#26283a"/>
<ellipse cx="4.3" cy="-2.2" rx="1.25" ry="1.8" fill="#26283a"/>
<path d="M-6.2 -6.2Q-4.6 -7.8 -3.2 -7M6.2 -6.2Q4.6 -7.8 3.2 -7" fill="none" stroke="#3a3320" stroke-width="0.95" stroke-linecap="round"/>
</g><g transform="translate(168.89999999999986 442.1) scale(2.0149999999999997)">
<circle r="10" fill="url(#ang)"/>
<path d="M-6 -1.1L-3.2 0.3M6 -1.1L3.2 0.3" fill="none" stroke="#2a1f2a" stroke-width="0.95" stroke-linecap="round"/>
<ellipse cx="-3.6" cy="1.1" rx="0.9" ry="0.7" fill="#2a1f2a"/>
<ellipse cx="3.6" cy="1.1" rx="0.9" ry="0.7" fill="#2a1f2a"/>
<path d="M-3.8 4.7Q-2.9 3.5 -1.9 4.5Q-0.9 3.5 0 4.5Q0.9 3.5 1.9 4.5Q2.9 3.5 3.8 4.7M-3.8 4.7Q-2.9 5.7 -1.9 4.8Q-0.9 5.7 0 4.8Q0.9 5.7 1.9 4.8Q2.9 5.7 3.8 4.7" fill="none" stroke="#2a1f2a" stroke-width="0.65" stroke-linecap="round"/>
</g><g transform="translate(231.89999999999986 442.1) scale(1.75) rotate(-3)">
<circle r="10" fill="#f7d262"/>
<path d="M-6.6 -6.4L-3.2 -5L-6.6 -3.6M6.6 -6.4L3.2 -5L6.6 -3.6" fill="none" stroke="#2a2b3a" stroke-width="1" stroke-linecap="round" stroke-linejoin="round"/>
<path d="M-8 -2Q0 -2.8 8 -2Q8.4 7.2 0 7.4Q-8.4 7.2 -8 -2Z" fill="#26283a"/>
<path d="M-5 5.4Q0 2 5 5.4Q2.6 7.4 0 7.4Q-2.6 7.4 -5 5.4Z" fill="#f2566f"/>
</g><g transform="translate(293.5999999999999 442.1) scale(1.85)">
<circle r="10" fill="#f7d468"/>
<ellipse cx="0" cy="3.6" rx="2.3" ry="3.9" fill="#26283a"/>
<ellipse cx="-4.3" cy="-2.2" rx="1.25" ry="1.8" fill="#26283a"/>
<ellipse cx="4.3" cy="-2.2" rx="1.25" ry="1.8" fill="#26283a"/>
<path d="M-6.2 -6.2Q-4.6 -7.8 -3.2 -7M6.2 -6.2Q4.6 -7.8 3.2 -7" fill="none" stroke="#3a3320" stroke-width="0.95" stroke-linecap="round"/>
</g><g transform="translate(355.5 442.1) scale(2.0149999999999997)">
<circle r="10" fill="url(#ang)"/>
<path d="M-6 -1.1L-3.2 0.3M6 -1.1L3.2 0.3" fill="none" stroke="#2a1f2a" stroke-width="0.95" stroke-linecap="round"/>
<ellipse cx="-3.6" cy="1.1" rx="0.9" ry="0.7" fill="#2a1f2a"/>
<ellipse cx="3.6" cy="1.1" rx="0.9" ry="0.7" fill="#2a1f2a"/>
<path d="M-3.8 4.7Q-2.9 3.5 -1.9 4.5Q-0.9 3.5 0 4.5Q0.9 3.5 1.9 4.5Q2.9 3.5 3.8 4.7M-3.8 4.7Q-2.9 5.7 -1.9 4.8Q-0.9 5.7 0 4.8Q0.9 5.7 1.9 4.8Q2.9 5.7 3.8 4.7" fill="none" stroke="#2a1f2a" stroke-width="0.65" stroke-linecap="round"/>
</g></svg><div class="abs" style="left:128.2px;top:848.5px;width:141px;height:6px;border-radius:3px;background:#0a0a0a"></div></div><div class="abs" style="left:1593.8px;top:942.2px;width:119px;height:30.4px;border-radius:6px;background:#1c1c1c;border:1.2px solid #303030;color:#d6d6d6;font-size:13px;line-height:29.5px;text-align:center;letter-spacing:0.3px;white-space:nowrap;-webkit-text-stroke:0.25px #d6d6d6">iPhone X - 11.4</div>
<div id="status" class="abs"><svg class="abs" style="left:12.5px;top:5.5px" width="12" height="12" viewBox="0 0 12 12"><circle cx="6" cy="6" r="5.7" fill="#fff"/><path d="M3.6 3.6L8.4 8.4M8.4 3.6L3.6 8.4" stroke="#1a6fcb" stroke-width="1.5"/></svg><span class="st" style="left:28.3px;font-size:13px">0</span><svg class="abs" style="left:40.5px;top:5.5px" width="12" height="12" viewBox="0 0 12 12"><path d="M6 0.3L11.8 11.5H0.2Z" fill="#fff"/><rect x="5.3" y="4" width="1.4" height="4" fill="#1a6fcb"/><rect x="5.3" y="9" width="1.4" height="1.4" fill="#1a6fcb"/></svg><span class="st" style="left:56.2px;font-size:13px">0</span><span class="st" style="left:1472px">Ln 10, Col 23</span><span class="st" style="left:1561px">Spaces: 4</span><span class="st" style="left:1632px">UTF-8</span><span class="st" style="left:1683.7px">LF</span><span class="st" style="left:1712.8px">JavaScript</span><span class="st" style="left:1787.2px">Prettier: <span style="font-size:15px;line-height:10px;position:relative;top:0.5px">✓</span></span><svg class="abs" style="left:1862.5px;top:3.5px" width="15" height="15" viewBox="0 0 15 15"><circle cx="7.5" cy="7.5" r="7.2" fill="#fff"/><circle cx="5" cy="5.6" r="1.2" fill="#1a6fcb"/><circle cx="10" cy="5.6" r="1.2" fill="#1a6fcb"/><path d="M3.6 8.6Q7.5 13.4 11.4 8.6" fill="none" stroke="#1a6fcb" stroke-width="1.5" stroke-linecap="round"/></svg><svg class="abs" style="left:1892px;top:4px" width="14" height="14" viewBox="0 0 14 14"><path d="M7 0.6C4.3 0.6 3.2 2.8 3.2 5.2C3.2 8 2.2 9.3 0.8 10.6V11.4H13.2V10.6C11.8 9.3 10.8 8 10.8 5.2C10.8 2.8 9.7 0.6 7 0.6Z" fill="#fff"/><path d="M5.4 12.2A1.7 1.7 0 0 0 8.6 12.2Z" fill="#fff"/></svg></div>
<div class="abs" style="left:0;top:1005.3px;width:1920px;height:1.7px;background:rgba(0,0,20,0.45)"></div>
<svg class="abs" style="left:0;top:999px" width="8" height="8" viewBox="0 0 8 8"><path d="M0 0Q0 8 8 8H0Z" fill="#0c0c10"/></svg>
<svg class="abs" style="left:1912px;top:999px" width="8" height="8" viewBox="0 0 8 8"><path d="M8 0Q8 8 0 8H8Z" fill="#0c0c10"/></svg>
</div></body></html>
